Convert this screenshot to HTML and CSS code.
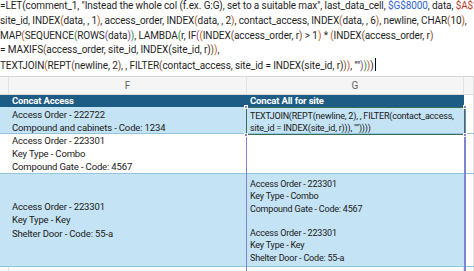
FILE: index.html
```html
<!DOCTYPE html>
<html lang="en">
<head>
    <meta charset="UTF-8">
    <meta name="viewport" content="width=device-width, initial-scale=1.0">
    <title>Concat Access</title>
    <link rel="stylesheet" href="styles.css">
</head>
<body>
    <div class="formula-bar">
        <div class="fx-line">=LET<span class="p1">(</span>comment_1, "Instead the whole col (f.ex. G:G), set to a suitable max", last_data_cell, <span class="ref-blue">$G$8000</span>, data, <span class="ref-red">$A$2:$G$8000</span>,</div>
        <div class="fx-line">site_id, INDEX<span class="p2">(</span>data, , 1<span class="p2">)</span>, access_order, INDEX<span class="p2">(</span>data, , 2<span class="p2">)</span>, contact_access, INDEX<span class="p2">(</span>data, , 6<span class="p2">)</span>, newline, CHAR<span class="p2">(</span>10<span class="p2">)</span>,</div>
        <div class="fx-line">MAP<span class="p2">(</span>SEQUENCE<span class="p3">(</span>ROWS<span class="p4">(</span>data<span class="p4">)</span><span class="p3">)</span>, LAMBDA<span class="p3">(</span>r, IF<span class="p4">(</span><span class="p5">(</span>INDEX<span class="p6">(</span>access_order, r<span class="p6">)</span> &gt; 1<span class="p5">)</span> * <span class="p5">(</span>INDEX<span class="p6">(</span>access_order, r<span class="p6">)</span></div>
        <div class="fx-line">= MAXIFS<span class="p6">(</span>access_order, site_id, INDEX<span class="p1">(</span>site_id, r<span class="p1">)</span><span class="p6">)</span><span class="p5">)</span>,</div>
        <div class="fx-line">TEXTJOIN<span class="p5">(</span>REPT<span class="p6">(</span>newline, 2<span class="p6">)</span>, , FILTER<span class="p6">(</span>contact_access, site_id = INDEX<span class="p1">(</span>site_id, r<span class="p1">)</span><span class="p6">)</span><span class="p5">)</span>, ""<span class="p4">)</span><span class="p3">)</span><span class="p2">)</span><span class="p1">)</span><span class="caret"></span></div>
    </div>

    <div class="sheet">
        <div class="row col-heads">
            <div class="cell"></div>
            <div class="cell">F</div>
            <div class="cell">G</div>
            <div class="cell"></div>
        </div>
        <div class="row head">
            <div class="cell"></div>
            <div class="cell">Concat Access</div>
            <div class="cell">Concat All for site</div>
            <div class="cell out"></div>
        </div>
        <div class="row band r1">
            <div class="cell"></div>
            <div class="cell">Access Order - 222722<br>Compound and cabinets - Code: 1234</div>
            <div class="cell g">TEXTJOIN(REPT(newline, 2), , FILTER(contact_access,<br>site_id = INDEX(site_id, r))), ""))))</div>
            <div class="cell out"></div>
        </div>
        <div class="row plain r2">
            <div class="cell"></div>
            <div class="cell">Access Order - 223301<br>Key Type - Combo<br>Compound Gate - Code: 4567</div>
            <div class="cell"></div>
            <div class="cell out"></div>
        </div>
        <div class="row band r3">
            <div class="cell"></div>
            <div class="cell mid">Access Order - 223301<br>Key Type - Key<br>Shelter Door - Code: 55-a</div>
            <div class="cell g">Access Order - 223301<br>Key Type - Combo<br>Compound Gate - Code: 4567<br><br>Access Order - 223301<br>Key Type - Key<br>Shelter Door - Code: 55-a</div>
            <div class="cell out"></div>
        </div>
        <div class="row empty">
            <div class="cell out"></div>
            <div class="cell out"></div>
            <div class="cell out"></div>
            <div class="cell out"></div>
        </div>

        <!-- range highlight for column G and the active cell -->
        <div class="range-g"></div>
        <div class="active-cell">
            <span class="handle tl"></span>
            <span class="handle tr"></span>
            <span class="handle bl"></span>
            <span class="handle br"></span>
        </div>
    </div>
</body>
</html>
```

FILE: styles.css
```css
body {
    margin: 0;
    width: 474px;
    height: 271px;
    overflow: hidden;
    background: #fff;
    font-family: Roboto, "Liberation Sans", sans-serif;
}
.formula-bar {
    height: 77px;
    border-bottom: 1px solid #d6d6d6;
    box-sizing: border-box;
    overflow: hidden;
    color: #1f1f1f;
    font-size: 10px;
    letter-spacing: -0.1px;
}
.fx-line {
    height: 14.75px;
    line-height: 14.75px;
    white-space: nowrap;
    margin-top: -1px;
    margin-bottom: 1px;
}
.ref-blue { color: #2f5fd0; }
.ref-red { color: #c0392b; }
.p1 { color: #1f1f1f; }
.p2 { color: #b4561a; }
.p3 { color: #2e8b3a; }
.p4 { color: #8a3c9c; }
.p5 { color: #c05a1c; }
.p6 { color: #7a4a2a; }
.caret {
    display: inline-block;
    width: 1px;
    height: 13px;
    background: #000;
    vertical-align: -2px;
    margin-left: 1px;
}

.sheet {
    position: relative;
    font-size: 9.5px;
    letter-spacing: -0.15px;
    color: #1a1a1a;
}
.row {
    display: grid;
    grid-template-columns: 9px 238px 217px 1fr;
}
.cell {
    padding: 0 3px;
    line-height: 13.2px;
    white-space: nowrap;
    overflow: hidden;
}
.cell.g {
    font-size: 9px;
    letter-spacing: -0.2px;
    line-height: 12.3px;
}
.col-heads {
    height: 18px;
    background: #f5f5f5;
    border-bottom: 1px solid #dadada;
    box-sizing: border-box;
}
.col-heads .cell {
    line-height: 18px;
    text-align: center;
    color: #666;
    font-size: 10px;
    letter-spacing: 0;
    border-right: 1px solid #e2e2e2;
}
.head {
    height: 12px;
    background: #1d5c84;
    color: #fff;
    font-weight: bold;
}
.head .cell { line-height: 12px; }
.band {
    background: #c4e3f4;
    border-bottom: 1px solid #93c4e2;
    box-sizing: border-box;
}
.plain {
    background: #fff;
    border-bottom: 1px solid #93c4e2;
    box-sizing: border-box;
}
.r1 { height: 27px; }
.r1 .cell { padding-top: 1px; }
.r1 .cell.g { padding-top: 3px; }
.r2 { height: 40px; }
.r3 { height: 93px; }
.r3 .cell { padding-top: 4px; }
.r3 .cell.mid {
    display: flex;
    align-items: center;
    padding-top: 0;
}
.empty { height: 20px; }
.cell.out {
    background: #fff;
    border-right: 1px solid #e2e2e2;
    border-bottom: 1px solid #e2e2e2;
}
.band .cell.out, .plain .cell.out, .head .cell.out {
    border-bottom: none;
}

.range-g {
    position: absolute;
    left: 246px;
    top: 30px;
    width: 217px;
    height: 200px;
    border-left: 1px solid #7d86cf;
    border-right: 2px solid #7d86cf;
}
.active-cell {
    position: absolute;
    left: 246px;
    top: 30px;
    width: 219px;
    height: 28px;
    border: 1.5px solid #3b6e52;
    box-sizing: border-box;
}
.handle {
    position: absolute;
    width: 4px;
    height: 4px;
    background: #8a7fc4;
    border: 1px solid #fff;
    box-sizing: border-box;
}
.tl { left: -3px; top: -3px; }
.tr { right: -3px; top: -3px; }
.bl { left: -3px; bottom: -3px; }
.br { right: -3px; bottom: -3px; }
```
